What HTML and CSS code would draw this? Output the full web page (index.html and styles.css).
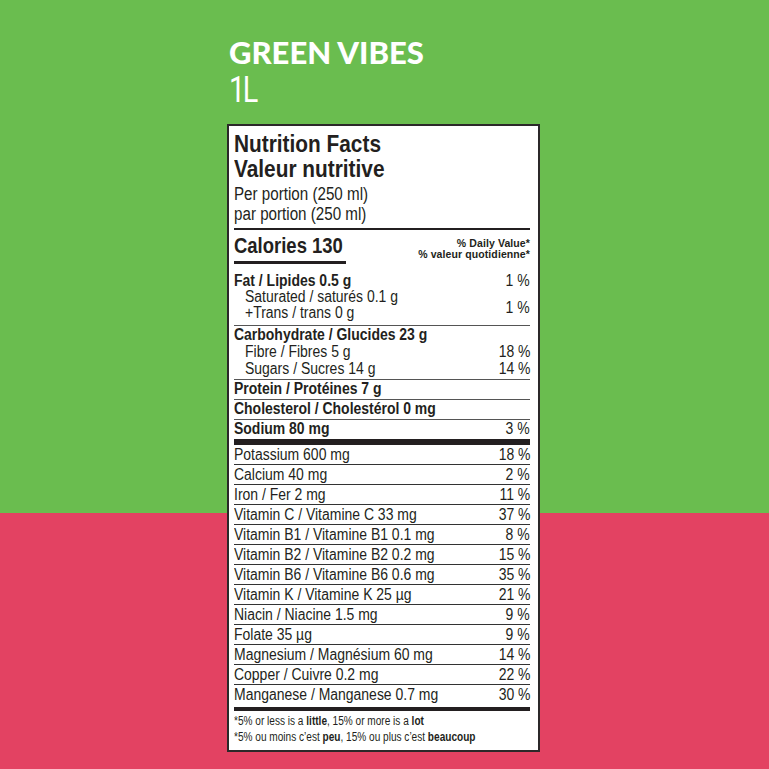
FILE: index.html
```html
<!DOCTYPE html>
<html lang="en">
<head>
<meta charset="utf-8">
<title>Green Vibes 1L – Nutrition Facts</title>
<link rel="stylesheet" href="styles.css">
</head>
<body>
<main class="page">
  <header class="brand">
    <h1 class="brand-name">GREEN VIBES</h1>
    <p class="brand-size">1L</p>
  </header>

  <section class="label">
    <div class="nf-title">
      <div class="sq">Nutrition Facts</div>
      <div class="sq">Valeur nutritive</div>
    </div>
    <div class="nf-serving">
      <div class="sq">Per portion (250 ml)</div>
      <div class="sq">par portion (250 ml)</div>
    </div>

    <div class="nf-cal">
      <div class="cal"><span class="sq">Calories 130</span></div>
      <div class="dv">
        <div>% Daily Value*</div>
        <div>% valeur quotidienne*</div>
      </div>
    </div>
    <div class="cal-bar"></div>

    <div class="sec sec-fat">
      <div class="row"><span class="lbl b">Fat / Lipides 0.5 g</span><span class="pct">1 %</span></div>
      <div class="row">
        <div class="indent">
          <div class="lbl">Saturated / saturés 0.1 g</div>
          <div class="lbl">+Trans / trans 0 g</div>
        </div>
        <span class="pct pct-mid">1 %</span>
      </div>
    </div>

    <div class="sec">
      <div class="row"><span class="lbl b">Carbohydrate / Glucides 23 g</span></div>
      <div class="row indent"><span class="lbl">Fibre / Fibres 5 g</span><span class="pct">18 %</span></div>
      <div class="row indent"><span class="lbl">Sugars / Sucres 14 g</span><span class="pct">14 %</span></div>
    </div>

    <div class="sec">
      <div class="row"><span class="lbl b">Protein / Protéines 7 g</span></div>
    </div>

    <div class="sec">
      <div class="row"><span class="lbl b">Cholesterol / Cholestérol 0 mg</span></div>
    </div>

    <div class="sec sec-thick">
      <div class="row"><span class="lbl b">Sodium 80 mg</span><span class="pct">3 %</span></div>
    </div>

    <ul class="minerals">
      <li><span class="lbl">Potassium 600 mg</span><span class="pct">18 %</span></li>
      <li><span class="lbl">Calcium 40 mg</span><span class="pct">2 %</span></li>
      <li><span class="lbl">Iron / Fer 2 mg</span><span class="pct">11 %</span></li>
      <li><span class="lbl">Vitamin C / Vitamine C 33 mg</span><span class="pct">37 %</span></li>
      <li><span class="lbl">Vitamin B1 / Vitamine B1 0.1 mg</span><span class="pct">8 %</span></li>
      <li><span class="lbl">Vitamin B2 / Vitamine B2 0.2 mg</span><span class="pct">15 %</span></li>
      <li><span class="lbl">Vitamin B6 / Vitamine B6 0.6 mg</span><span class="pct">35 %</span></li>
      <li><span class="lbl">Vitamin K / Vitamine K 25 µg</span><span class="pct">21 %</span></li>
      <li><span class="lbl">Niacin / Niacine 1.5 mg</span><span class="pct">9 %</span></li>
      <li><span class="lbl">Folate 35 µg</span><span class="pct">9 %</span></li>
      <li><span class="lbl">Magnesium / Magnésium 60 mg</span><span class="pct">14 %</span></li>
      <li><span class="lbl">Copper / Cuivre 0.2 mg</span><span class="pct">22 %</span></li>
      <li><span class="lbl">Manganese / Manganese 0.7 mg</span><span class="pct">30 %</span></li>
    </ul>

    <div class="foot">
      <p>*5% or less is a <b>little</b>, 15% or more is a <b>lot</b></p>
      <p>*5% ou moins c’est <b>peu</b>, 15% ou plus c’est <b>beaucoup</b></p>
    </div>
  </section>
</main>
</body>
</html>
```

FILE: styles.css
```css
html, body {
  margin: 0;
  padding: 0;
}

body {
  min-height: 769px;
  background: linear-gradient(to bottom, #6abd4f 0, #6abd4f 513px, #e34262 513px, #e34262 100%);
  color: #231f20;
  font-family: "Liberation Sans", Arial, sans-serif;
}

.page {
  padding: 37px 0 0 227px;
}

.brand {
  padding-left: 2px;
  color: #ffffff;
}

.brand-name {
  margin: 0;
  font-family: Lato, "Open Sans", sans-serif;
  font-weight: 900;
  font-size: 31px;
  line-height: 31px;
}

.brand-size {
  display: inline-block;
  margin: 4px 0 0;
  font-family: Roboto, "Open Sans", sans-serif;
  font-weight: 400;
  font-size: 36px;
  line-height: 36px;
  letter-spacing: -3px;
  transform: scaleX(0.8);
  transform-origin: 0 50%;
}

.label {
  box-sizing: border-box;
  width: 313px;
  margin-top: 16px;
  padding: 5px 8px 5px 5px;
  background: #ffffff;
  border: 2px solid #2b2829;
}

/* condensed look: the sandbox has no condensed face, so the text is squeezed horizontally */
.sq,
.lbl,
.pct {
  display: block;
  white-space: nowrap;
  transform-origin: 0 50%;
}

.nf-title {
  font-weight: 700;
  font-size: 24px;
  line-height: 25px;
}

.nf-title .sq {
  transform: scaleX(0.868);
}

.nf-serving {
  margin-top: 3px;
  padding-bottom: 4px;
  border-bottom: 2px solid #231f20;
  font-size: 18px;
  line-height: 20px;
}

.nf-serving .sq {
  transform: scaleX(0.843);
}

.nf-cal {
  display: flex;
  justify-content: space-between;
  align-items: flex-start;
  height: 31px;
}

.cal {
  padding-top: 3px;
  font-weight: 700;
  font-size: 22px;
  line-height: 26px;
}

.cal .sq {
  transform: scaleX(0.84);
}

.dv {
  margin-top: 8px;
  text-align: right;
  font-weight: 700;
  font-size: 10.5px;
  line-height: 10.5px;
  letter-spacing: 0.1px;
}

.cal-bar {
  width: 112px;
  height: 3px;
  background: #231f20;
}

.sec {
  padding-bottom: 2px;
  border-bottom: 1px solid #555;
  font-size: 16px;
  line-height: 17px;
}

.sec-fat {
  padding-top: 9px;
  padding-bottom: 4px;
  line-height: 16px;
}

.sec-thick {
  border-bottom: 6px solid #231f20;
}

.row {
  display: flex;
  justify-content: space-between;
  align-items: flex-start;
}

.lbl {
  transform: scaleX(0.873);
}

.pct {
  transform: scaleX(0.873);
  transform-origin: 100% 50%;
}

.b {
  font-weight: 700;
}

.indent {
  padding-left: 11px;
}

.pct-mid {
  margin-top: 11px;
}

.minerals {
  list-style: none;
  margin: 0;
  padding: 0;
  font-size: 16px;
  line-height: 19px;
}

.minerals li {
  display: flex;
  justify-content: space-between;
  border-bottom: 1px solid #333;
}

.minerals li:last-child {
  border-bottom: none;
}

.foot {
  margin-top: 3px;
  padding-top: 2px;
  border-top: 4px solid #231f20;
  font-size: 12px;
  line-height: 16px;
}

.foot p {
  margin: 0;
  white-space: nowrap;
  transform: scaleX(0.84);
  transform-origin: 0 50%;
}
```
